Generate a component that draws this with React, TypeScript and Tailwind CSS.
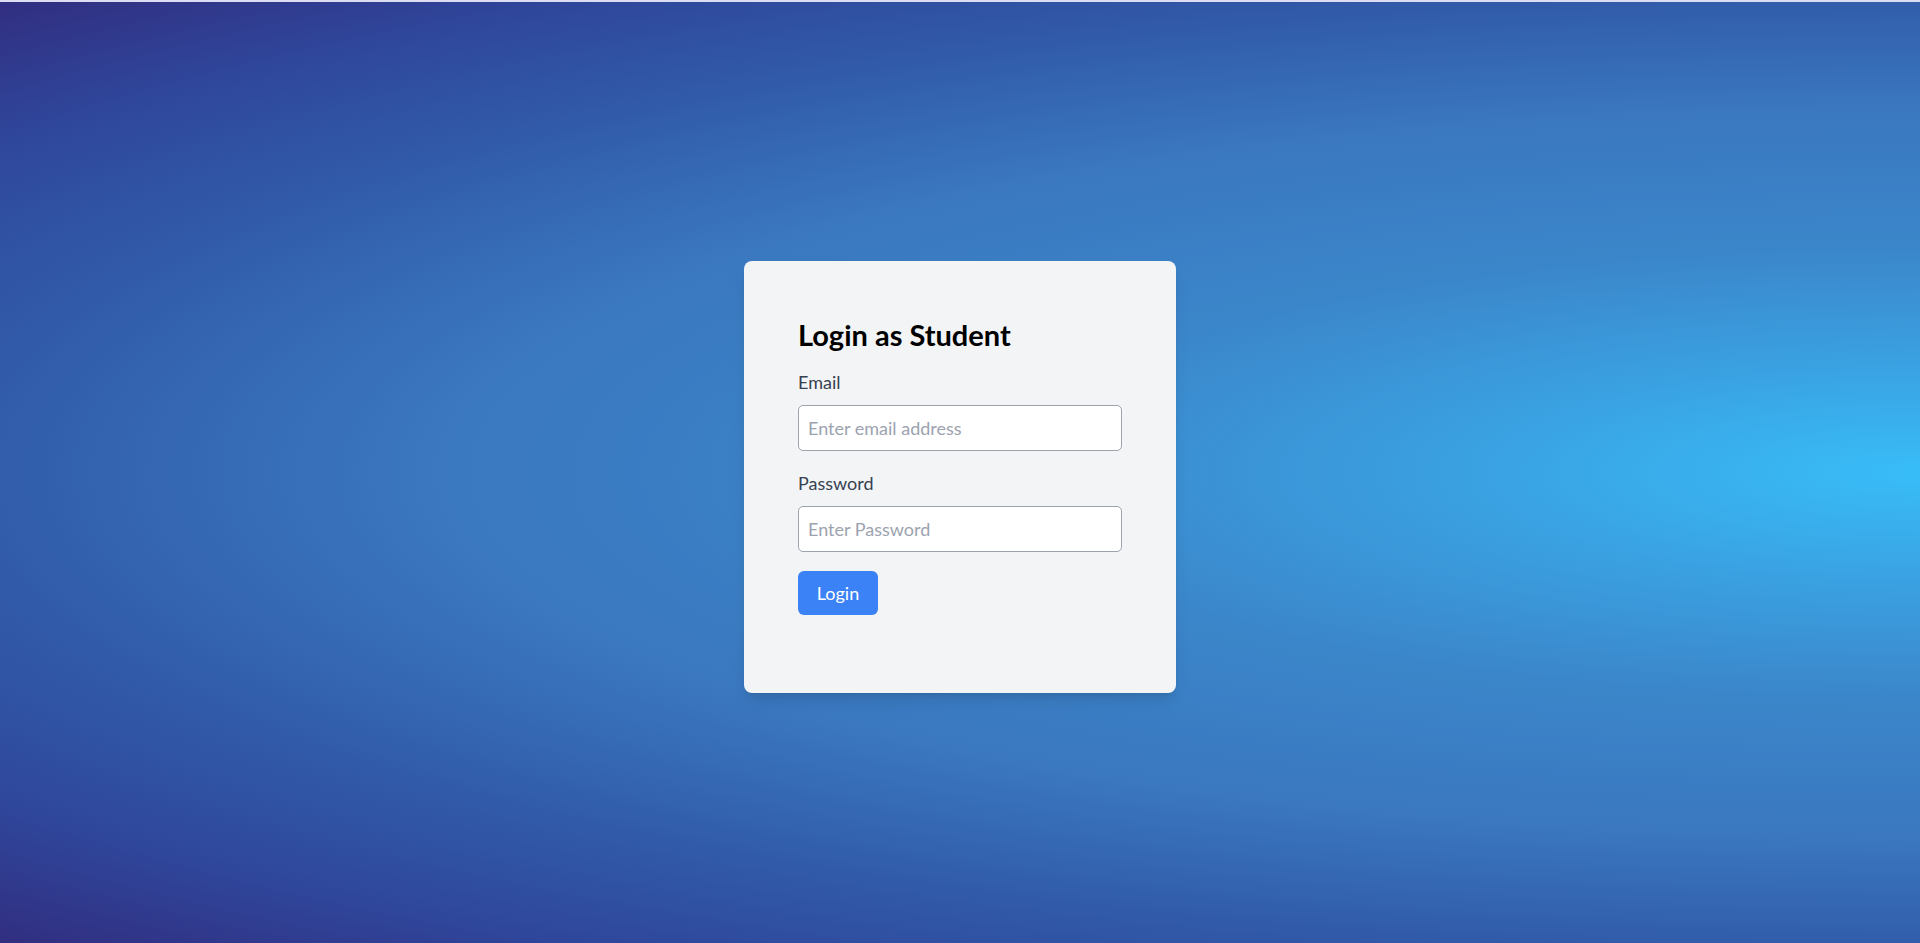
import { useState } from "react";

export default function App() {
  const [email, setEmail] = useState("");
  const [password, setPassword] = useState("");

  return (
    <div className="font-['Lato','Liberation_Sans',sans-serif]">
      <div className="h-[2px] bg-[#dcdcf3]" />
      <main className="h-[941px] flex justify-center items-start pt-[259px] bg-[radial-gradient(ellipse_at_right,#38bdf8_0%,#3aa2e2_16%,#3b86ca_34%,#3a77bf_55%,#315ba9_72%,#2f479b_86%,#312e81_100%)]">
        <div className="w-[432px] h-[432px] bg-[#f3f4f6] rounded-lg shadow-lg px-[54px] pt-[56px]">
          <h2 className="text-[29px] leading-[35px] font-bold text-black mb-4">Login as Student</h2>
          <label className="block text-lg text-[#374151] mb-[9px]">Email</label>
          <input
            type="email"
            value={email}
            onChange={(e) => setEmail(e.target.value)}
            placeholder="Enter email address"
            className="block w-full h-[46px] bg-white border border-[#9ca3af] rounded-[5px] px-[9px] text-lg placeholder:text-[#9ca3af] outline-none"
          />
          <label className="block text-lg text-[#374151] mt-[18px] mb-[9px]">Password</label>
          <input
            type="password"
            value={password}
            onChange={(e) => setPassword(e.target.value)}
            placeholder="Enter Password"
            className="block w-full h-[46px] bg-white border border-[#9ca3af] rounded-[5px] px-[9px] text-lg placeholder:text-[#9ca3af] outline-none"
          />
          <button className="mt-[19px] w-[80px] h-[44px] bg-[#3b82f6] hover:bg-blue-600 text-white text-lg rounded-md">
            Login
          </button>
        </div>
      </main>
    </div>
  );
}
